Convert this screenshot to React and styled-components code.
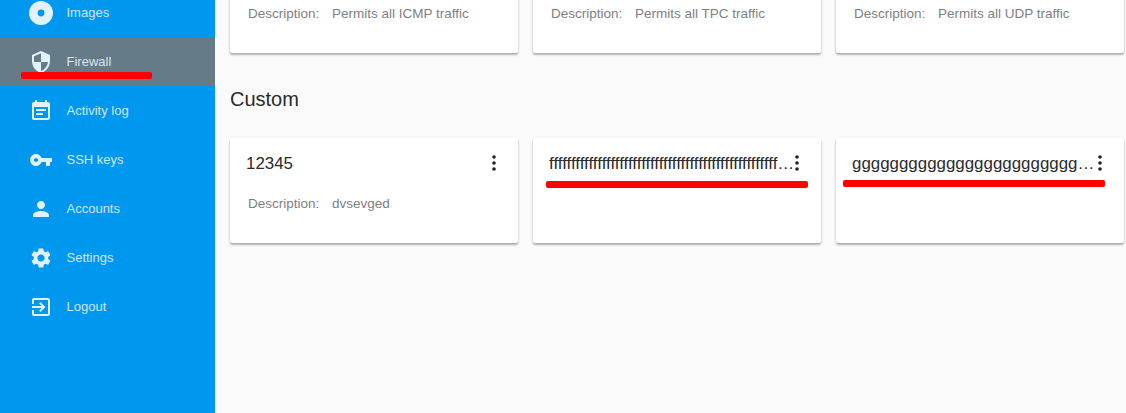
import React from 'react';
import styled, { createGlobalStyle } from 'styled-components';

const GlobalStyle = createGlobalStyle`
  html, body, #root {
    margin: 0;
    padding: 0;
    height: 100%;
  }

  body {
    background: #fafafa;
    font-family: 'Liberation Sans', Arial, sans-serif;
    overflow: hidden;
  }
`;

const Page = styled.div`
  display: flex;
  height: 100vh;
  overflow: hidden;
`;

const Sidebar = styled.aside`
  flex: 0 0 215px;
  background: #0097ee;
  overflow: hidden;
`;

/* the page is photographed scrolled, so the list starts above the top edge */
const NavList = styled.ul`
  list-style: none;
  margin: -12px 0 0;
  padding: 0;
`;

const NavItem = styled.li`
  position: relative;
  display: flex;
  align-items: center;
  gap: 13.5px;
  height: 49px;
  padding-left: 29px;
  background: ${({ $active }) => ($active ? '#657b87' : 'transparent')};
  color: #e1f2fd;
  font-size: 13px;

  span:first-of-type {
    opacity: 0.9;
  }

  svg {
    flex: none;
    width: 24px;
    height: 24px;
    fill: currentColor;
  }
`;

const Scribble = styled.span`
  position: absolute;
  left: ${({ $left }) => $left}px;
  top: ${({ $top }) => $top}px;
  width: ${({ $width }) => $width}px;
  height: 7px;
  border-radius: 2px;
  background: #ff0000;
`;

const Main = styled.main`
  flex: 1;
  min-width: 0;
  margin-top: -52px;
  padding: 0 2px 0 15px;
`;

const CardGrid = styled.div`
  display: grid;
  grid-template-columns: repeat(3, 288px);
  column-gap: 15px;
`;

const SectionTitle = styled.h2`
  margin: 0;
  padding: 31px 0 24px;
  height: 85px;
  box-sizing: border-box;
  font-size: 20px;
  line-height: 30px;
  font-weight: 400;
  color: #2a2a2a;
`;

const Card = styled.article`
  position: relative;
  height: 105px;
  background: #fff;
  border-radius: 2px;
  box-shadow: 0 1px 3px rgba(0, 0, 0, 0.12), 0 2px 2px rgba(0, 0, 0, 0.24);
`;

const CardHeader = styled.header`
  display: flex;
  align-items: center;
  height: 52px;
  padding: 0 12px 0 16px;
`;

const CardTitle = styled.span`
  flex: 1;
  min-width: 0;
  overflow: hidden;
  white-space: nowrap;
  text-overflow: ellipsis;
  font-size: 16.9px;
  color: #2a2a2a;
`;

const MenuIcon = styled.svg`
  flex: none;
  width: 24px;
  height: 24px;
  margin: -2px 0 0 -13px;
  fill: #212121;
`;

const Description = styled.div`
  display: flex;
  padding: 6px 18px 0;
  font-size: 13.5px;
  line-height: 16px;
  color: #808080;
`;

const DescriptionLabel = styled.span`
  flex: 0 0 84px;
`;

const icons = {
  images: (
    <svg viewBox="0 0 24 24"><path fillRule="evenodd" d="M12 0a12 12 0 1 0 0 24 12 12 0 0 0 0-24zm0 8.6a3.4 3.4 0 1 1 0 6.8 3.4 3.4 0 0 1 0-6.8z" /></svg>
  ),
  firewall: (
    <svg viewBox="0 0 24 24"><path d="M12 1L3 5v6c0 5.55 3.84 10.74 9 12 5.16-1.26 9-6.45 9-12V5l-9-4zm0 10.99h7c-.53 4.12-3.28 7.79-7 8.94V12H5V6.3l7-3.11v8.8z" /></svg>
  ),
  activity: (
    <svg viewBox="0 0 24 24"><path d="M17 10H7v2h10v-2zm2-7h-1V1h-2v2H8V1H6v2H5c-1.11 0-1.99.9-1.99 2L3 19c0 1.1.89 2 2 2h14c1.1 0 2-.9 2-2V5c0-1.1-.9-2-2-2zm0 16H5V8h14v11zm-5-5H7v2h7v-2z" /></svg>
  ),
  key: (
    <svg viewBox="0 0 24 24"><path d="M12.65 10C11.83 7.67 9.61 6 7 6c-3.31 0-6 2.69-6 6s2.69 6 6 6c2.61 0 4.83-1.67 5.65-4H17v4h4v-4h2v-4H12.65zM7 14c-1.1 0-2-.9-2-2s.9-2 2-2 2 .9 2 2-.9 2-2 2z" /></svg>
  ),
  person: (
    <svg viewBox="0 0 24 24"><path d="M12 12c2.21 0 4-1.79 4-4s-1.79-4-4-4-4 1.79-4 4 1.79 4 4 4zm0 2c-2.67 0-8 1.34-8 4v2h16v-2c0-2.66-5.33-4-8-4z" /></svg>
  ),
  settings: (
    <svg viewBox="0 0 24 24"><path d="M19.14 12.94c.04-.3.06-.61.06-.94 0-.32-.02-.64-.07-.94l2.03-1.58c.18-.14.23-.41.12-.61l-1.92-3.32c-.12-.22-.37-.29-.59-.22l-2.39.96c-.5-.38-1.03-.7-1.62-.94l-.36-2.54c-.04-.24-.24-.41-.48-.41h-3.84c-.24 0-.43.17-.47.41l-.36 2.54c-.59.24-1.13.57-1.62.94l-2.39-.96c-.22-.08-.47 0-.59.22L2.74 8.87c-.12.21-.08.47.12.61l2.03 1.58c-.05.3-.09.63-.09.94s.02.64.07.94l-2.03 1.58c-.18.14-.23.41-.12.61l1.92 3.32c.12.22.37.29.59.22l2.39-.96c.5.38 1.03.7 1.62.94l.36 2.54c.05.24.24.41.48.41h3.84c.24 0 .44-.17.47-.41l.36-2.54c.59-.24 1.13-.56 1.62-.94l2.39.96c.22.08.47 0 .59-.22l1.92-3.32c.12-.22.07-.47-.12-.61l-2.01-1.58zM12 15.6c-1.98 0-3.6-1.62-3.6-3.6s1.62-3.6 3.6-3.6 3.6 1.62 3.6 3.6-1.62 3.6-3.6 3.6z" /></svg>
  ),
  logout: (
    <svg viewBox="0 0 24 24"><path d="M10.09 15.59L11.5 17l5-5-5-5-1.41 1.41L12.67 11H3v2h9.67l-2.58 2.59zM19 3H5c-1.11 0-2 .9-2 2v4h2V5h14v14H5v-4H3v4c0 1.1.89 2 2 2h14c1.1 0 2-.9 2-2V5c0-1.1-.9-2-2-2z" /></svg>
  ),
};

const navItems = [
  { key: 'images', label: 'Images' },
  { key: 'firewall', label: 'Firewall', active: true, mark: { left: 21, top: 35, width: 131 } },
  { key: 'activity', label: 'Activity log' },
  { key: 'key', label: 'SSH keys' },
  { key: 'person', label: 'Accounts' },
  { key: 'settings', label: 'Settings' },
  { key: 'logout', label: 'Logout' },
];

const defaultCards = [
  { name: 'all-icmp', description: 'Permits all ICMP traffic' },
  { name: 'all-tcp', description: 'Permits all TPC traffic' },
  { name: 'all-udp', description: 'Permits all UDP traffic' },
];

const customCards = [
  { name: '12345', description: 'dvsevged' },
  { name: 'f'.repeat(120), mark: { left: 13, top: 43, width: 262 } },
  { name: 'g'.repeat(60), mark: { left: 7, top: 42, width: 262 } },
];

const FirewallCard = ({ name, description, mark }) => (
  <Card>
    <CardHeader>
      <CardTitle>{name}</CardTitle>
      <MenuIcon viewBox="0 0 24 24">
        <circle cx="12" cy="6" r="1.8" />
        <circle cx="12" cy="12" r="1.8" />
        <circle cx="12" cy="18" r="1.8" />
      </MenuIcon>
    </CardHeader>
    {description && (
      <Description>
        <DescriptionLabel>Description:</DescriptionLabel>
        <span>{description}</span>
      </Description>
    )}
    {mark && <Scribble $left={mark.left} $top={mark.top} $width={mark.width} />}
  </Card>
);

const App = () => (
  <Page>
    <GlobalStyle />
    <Sidebar>
      <NavList>
        {navItems.map(item => (
          <NavItem key={item.key} $active={item.active}>
            {icons[item.key]}
            <span>{item.label}</span>
            {item.mark && <Scribble $left={item.mark.left} $top={item.mark.top} $width={item.mark.width} />}
          </NavItem>
        ))}
      </NavList>
    </Sidebar>
    <Main>
      <CardGrid>
        {defaultCards.map(card => <FirewallCard key={card.name} {...card} />)}
      </CardGrid>
      <SectionTitle>Custom</SectionTitle>
      <CardGrid>
        {customCards.map(card => <FirewallCard key={card.name} {...card} />)}
      </CardGrid>
    </Main>
  </Page>
);

export default App;
